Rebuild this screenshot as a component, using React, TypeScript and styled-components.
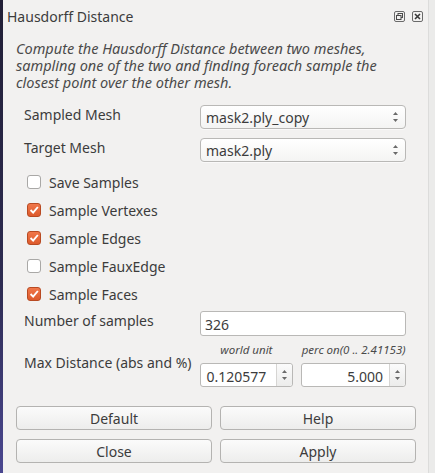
import { styled, createGlobalStyle } from 'styled-components';

const GlobalStyle = createGlobalStyle`
  html, body {
    margin: 0;
    padding: 0;
    background: #f2f1f0;
  }
  body {
    font-family: 'Noto Sans', 'Open Sans', sans-serif;
    color: #3c3c3c;
  }
`;

type CheckOption = {
  label: string;
  checked: boolean;
};

const checkOptions: CheckOption[] = [
  { label: 'Save Samples', checked: false },
  { label: 'Sample Vertexes', checked: true },
  { label: 'Sample Edges', checked: true },
  { label: 'Sample FauxEdge', checked: false },
  { label: 'Sample Faces', checked: true },
];

function RestoreIcon() {
  return (
    <svg width="11" height="11" viewBox="0 0 11 11">
      <rect x="0.5" y="0.5" width="10" height="10" rx="1.5" fill="none" stroke="#6a6a6a" />
      <rect x="4" y="2.5" width="4.5" height="4" fill="none" stroke="#4a4a4a" />
      <rect x="2.5" y="4.5" width="4.5" height="4" fill="#f2f1f0" stroke="#4a4a4a" />
    </svg>
  );
}

function CloseIcon() {
  return (
    <svg width="11" height="11" viewBox="0 0 11 11">
      <rect x="0.5" y="0.5" width="10" height="10" rx="1.5" fill="none" stroke="#6a6a6a" />
      <path d="M3 3 L8 8 M8 3 L3 8" stroke="#3a3a3a" strokeWidth="1.6" />
    </svg>
  );
}

function SpinArrows() {
  return (
    <svg width="7" height="14" viewBox="0 0 7 14">
      <path d="M1 5 L3.5 2 L6 5 Z" fill="#6a6a6a" />
      <path d="M1 9 L3.5 12 L6 9 Z" fill="#6a6a6a" />
    </svg>
  );
}

function CheckMark() {
  return (
    <svg width="14" height="14" viewBox="0 0 14 14">
      <path d="M3 7 L6 10 L11.5 3.5" fill="none" stroke="#ffffff" strokeWidth="2.2" />
    </svg>
  );
}

function App() {
  return (
    <>
      <GlobalStyle />
      <Frame>
        <LeftEdge />
        <Panel>
          <TitleBar>
            <Title>Hausdorff Distance</Title>
            <TitleIcons>
              <RestoreIcon />
              <CloseIcon />
            </TitleIcons>
          </TitleBar>

          <Description>
            Compute the Hausdorff Distance between two meshes, sampling one of
            the two and finding foreach sample the closest point over the other
            mesh.
          </Description>

          <Form>
            <FieldRow>
              <Label>Sampled Mesh</Label>
              <Combo>
                <span>mask2.ply_copy</span>
                <SpinArrows />
              </Combo>
            </FieldRow>
            <FieldRow $gap={9}>
              <Label>Target Mesh</Label>
              <Combo>
                <span>mask2.ply</span>
                <SpinArrows />
              </Combo>
            </FieldRow>

            <CheckList>
              {checkOptions.map((option) => (
                <CheckRow key={option.label}>
                  <CheckBox $checked={option.checked}>
                    {option.checked && <CheckMark />}
                  </CheckBox>
                  <span>{option.label}</span>
                </CheckRow>
              ))}
            </CheckList>

            <FieldRow $gap={0}>
              <Label>Number of samples</Label>
              <TextInput>326</TextInput>
            </FieldRow>

            <DistanceRow>
              <DistanceLabel>Max Distance (abs and %)</DistanceLabel>
              <SpinColumn $width={94}>
                <Hint>world unit</Hint>
                <SpinBox $align="left">
                  <SpinValue>0.120577</SpinValue>
                  <SpinButtons>
                    <SpinArrows />
                  </SpinButtons>
                </SpinBox>
              </SpinColumn>
              <SpinColumn $width={105}>
                <Hint>perc on(0 .. 2.41153)</Hint>
                <SpinBox $align="right">
                  <SpinValue>5.000</SpinValue>
                  <SpinButtons>
                    <SpinArrows />
                  </SpinButtons>
                </SpinBox>
              </SpinColumn>
            </DistanceRow>
          </Form>

          <ButtonGrid>
            <Button>Default</Button>
            <Button>Help</Button>
            <Button>Close</Button>
            <Button>Apply</Button>
          </ButtonGrid>
        </Panel>
        <RightEdge />
      </Frame>
    </>
  );
}

const Frame = styled.div`
  display: flex;
  height: 473px;
  width: 435px;
  overflow: hidden;
`;

const LeftEdge = styled.div`
  width: 3px;
  flex-shrink: 0;
  background: linear-gradient(#211f36, #2e2c52 60%, #4a4790);
`;

const RightEdge = styled.div`
  flex: 1;
  background: #ebebea;
  border-left: 1px solid #dcdcdb;
`;

const Panel = styled.div`
  width: 425px;
  flex-shrink: 0;
  background: #f2f1f0;
  display: flex;
  flex-direction: column;
`;

const TitleBar = styled.div`
  height: 32px;
  display: flex;
  align-items: center;
  justify-content: space-between;
  padding: 0 5px 0 4px;
  box-sizing: border-box;
`;

const Title = styled.div`
  font-size: 14px;
  color: #3c3c3c;
`;

const TitleIcons = styled.div`
  display: flex;
  gap: 7px;
  align-items: center;
`;

const Description = styled.p`
  margin: 8px 0 0;
  padding: 0 0 0 13px;
  max-width: 362px;
  font-style: italic;
  font-size: 14.5px;
  line-height: 17px;
  color: #4a4a4a;
`;

const Form = styled.div`
  display: flex;
  flex-direction: column;
  padding: 14px 22px 0 21px;
`;

const FieldRow = styled.div<{ $gap?: number }>`
  display: grid;
  grid-template-columns: 176px 206px;
  align-items: start;
  margin-top: ${(p) => p.$gap ?? 0}px;
`;

const Label = styled.div`
  font-size: 14px;
  line-height: 18px;
  padding-top: 1px;
`;

const Combo = styled.div`
  height: 24px;
  box-sizing: border-box;
  border: 1px solid #b9b8b6;
  border-radius: 4px;
  background: linear-gradient(#ffffff, #f4f4f3);
  display: flex;
  align-items: center;
  justify-content: space-between;
  padding: 0 6px 0 5px;
  font-size: 14px;
  box-shadow: 0 1px 0 rgba(255, 255, 255, 0.6);
`;

const CheckList = styled.div`
  display: flex;
  flex-direction: column;
  padding: 6px 0 3px 3px;
`;

const CheckRow = styled.div`
  height: 28px;
  display: flex;
  align-items: center;
  gap: 8px;
  font-size: 14px;
`;

const CheckBox = styled.div<{ $checked: boolean }>`
  width: 14px;
  height: 14px;
  box-sizing: border-box;
  border-radius: 3px;
  border: 1px solid ${(p) => (p.$checked ? '#b84a22' : '#a9a8a6')};
  background: ${(p) => (p.$checked ? 'linear-gradient(#f0774a, #dd5a2c)' : '#ffffff')};
  display: flex;
  align-items: center;
  justify-content: center;
`;

const TextInput = styled.div`
  height: 25px;
  box-sizing: border-box;
  border: 1px solid #b9b8b6;
  border-radius: 3px;
  background: #ffffff;
  display: flex;
  align-items: center;
  padding: 2px 4px 0;
  font-size: 14px;
`;

const DistanceRow = styled.div`
  display: flex;
  align-items: flex-end;
  margin-top: 7px;
`;

const DistanceLabel = styled.div`
  width: 176px;
  font-size: 14px;
  padding-bottom: 15px;
`;

const SpinColumn = styled.div<{ $width: number }>`
  width: ${(p) => p.$width}px;
  display: flex;
  flex-direction: column;
  align-items: stretch;
  & + & {
    margin-left: 8px;
  }
`;

const Hint = styled.div`
  font-size: 11.5px;
  font-style: italic;
  text-align: center;
  white-space: nowrap;
  color: #4a4a4a;
  height: 20px;
  line-height: 14px;
`;

const SpinBox = styled.div<{ $align: 'left' | 'right' }>`
  height: 24px;
  box-sizing: border-box;
  border: 1px solid #b9b8b6;
  border-radius: 3px;
  background: #ffffff;
  display: flex;
  font-size: 14px;
  & > span {
    text-align: ${(p) => p.$align};
  }
`;

const SpinValue = styled.span`
  flex: 1;
  align-self: center;
  padding: 2px 6px 0;
`;

const SpinButtons = styled.div`
  width: 15px;
  border-left: 1px solid #d6d5d3;
  background: linear-gradient(#fbfbfb, #ececeb);
  border-radius: 0 3px 3px 0;
  display: flex;
  align-items: center;
  justify-content: center;
`;

const ButtonGrid = styled.div`
  display: grid;
  grid-template-columns: 196px 196px;
  column-gap: 8px;
  row-gap: 9px;
  padding: 19px 0 0 13px;
`;

const Button = styled.button`
  height: 24px;
  box-sizing: border-box;
  border: 1px solid #b4b3b1;
  border-radius: 4px;
  background: linear-gradient(#fbfbfb, #ededec);
  font-family: inherit;
  font-size: 14px;
  color: #3c3c3c;
  padding: 0;
`;

export default App;
